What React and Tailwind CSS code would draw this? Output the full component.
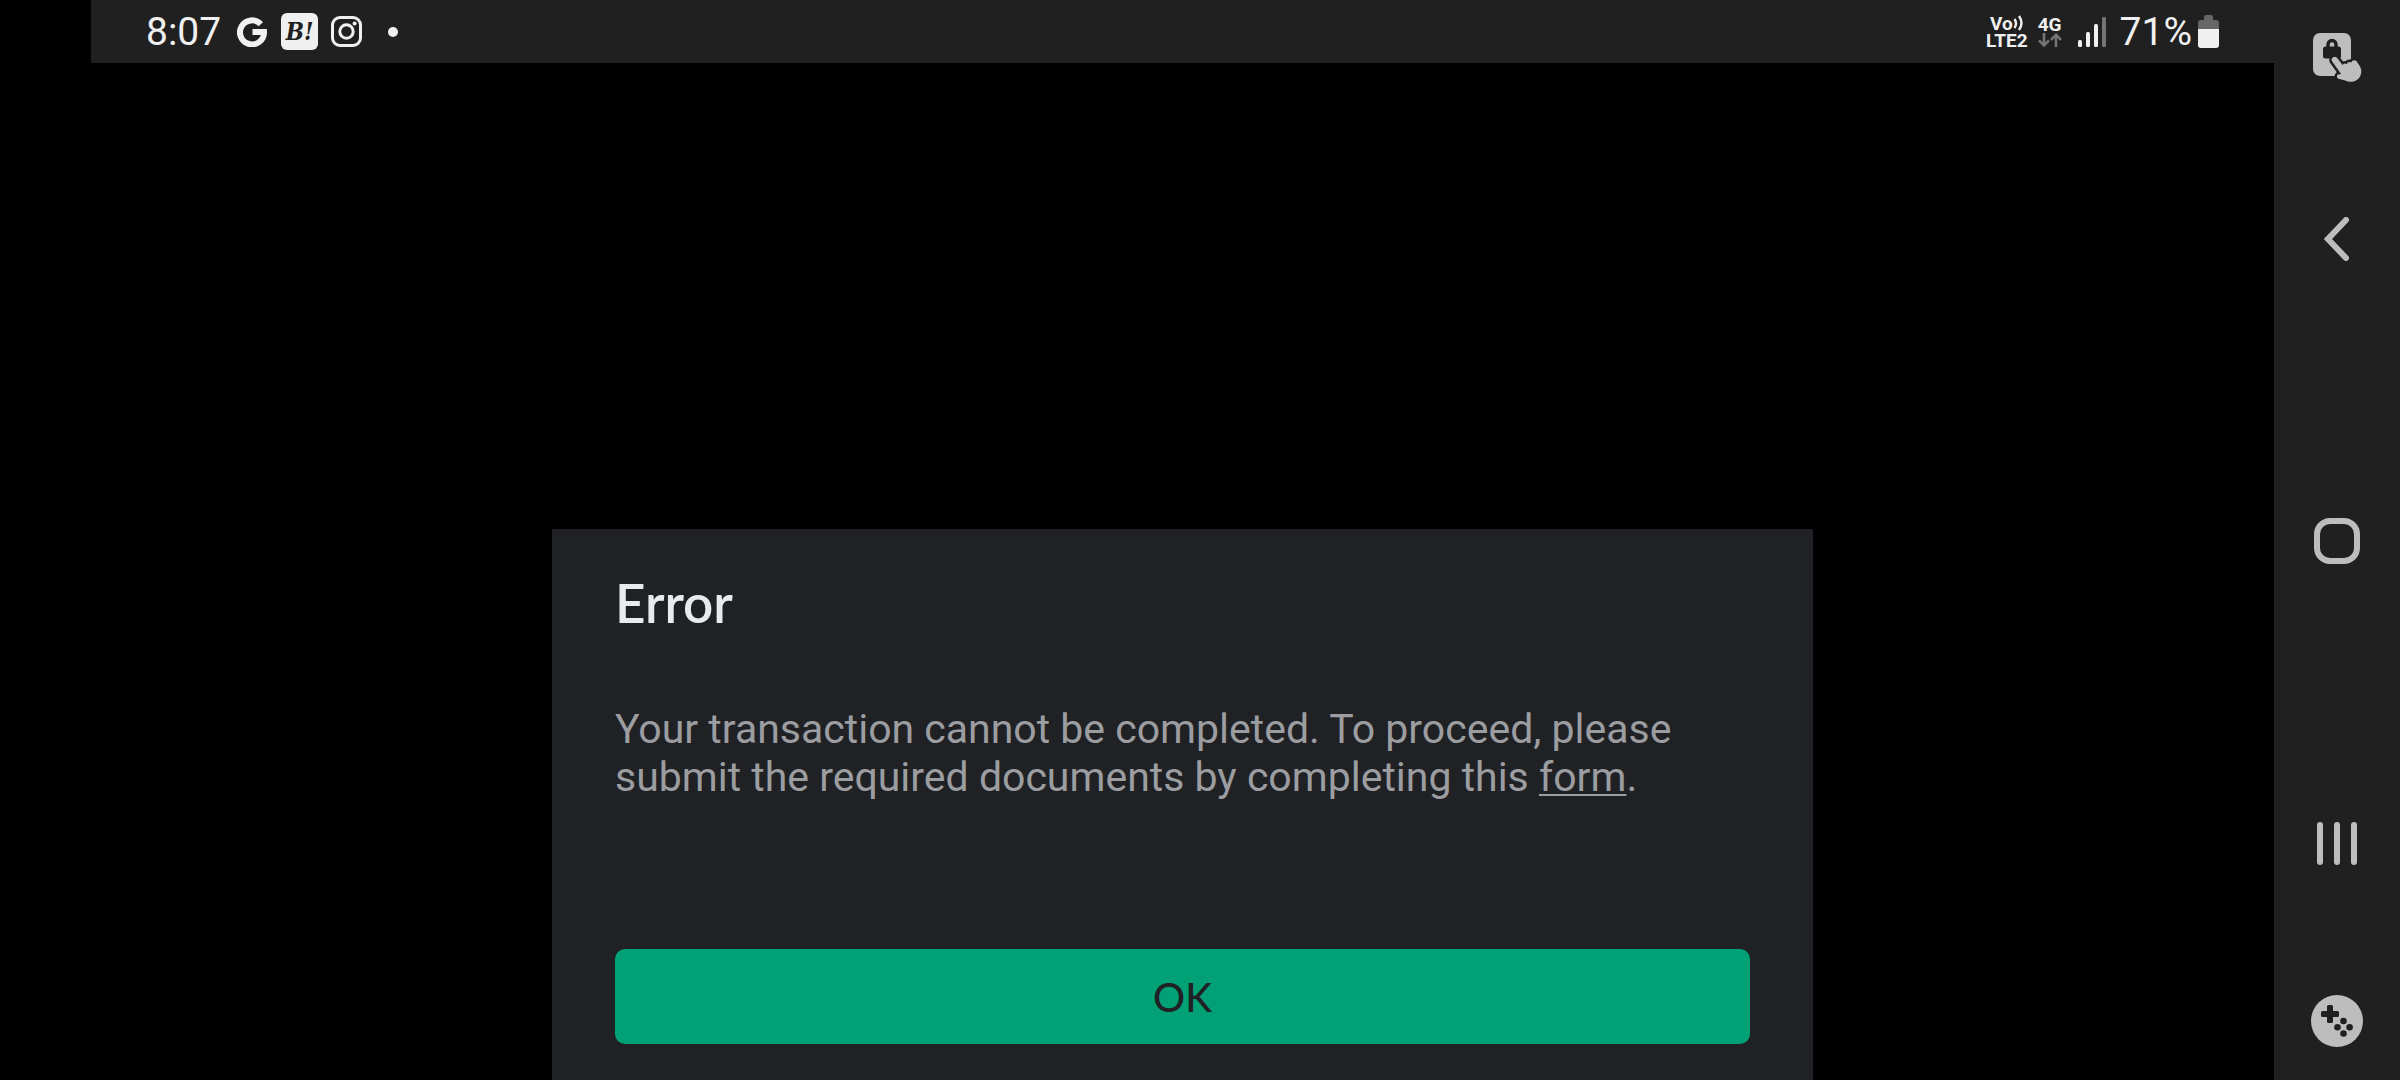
import React from 'react';

const GoogleIcon = () => (
  <svg viewBox="0 0 30 30" className="w-[30px] h-[30px]" fill="none" stroke="currentColor" strokeWidth="6">
    <path d="M23.8 7.2 A12 12 0 1 0 27 15 H15.5" strokeLinejoin="miter" />
  </svg>
);

const InstagramIcon = () => (
  <svg viewBox="0 0 31 31" className="w-[31px] h-[31px]" fill="none" stroke="currentColor" strokeWidth="3">
    <rect x="1.5" y="1.5" width="28" height="28" rx="7.5" />
    <circle cx="15.5" cy="15.5" r="6.7" />
    <circle cx="23.6" cy="7.4" r="2" fill="currentColor" stroke="none" />
  </svg>
);

const DataArrowsIcon = () => (
  <svg viewBox="0 0 24 14" className="w-6 h-[14px]" fill="none" stroke="#757575" strokeWidth="2.6">
    <path d="M6 0V12.4M1 7.4L6 12.4L11 7.4" />
    <path d="M18 14V1.8M13 6.8L18 1.8L23 6.8" />
  </svg>
);

const SignalIcon = () => (
  <svg viewBox="0 0 28 30" className="w-7 h-[30px]" fill="currentColor">
    <rect x="0" y="23" width="4" height="7" rx="1.5" />
    <rect x="8" y="15" width="4" height="15" rx="1.5" />
    <rect x="16" y="7" width="4" height="23" rx="1.5" />
    <rect x="24" y="0" width="4" height="30" rx="1.5" fill="#757575" />
  </svg>
);

const BatteryIcon = () => (
  <svg viewBox="0 0 21 33" className="w-[21px] h-[33px]">
    <path d="M6 5V2Q6 0 8 0H13Q15 0 15 2V5H18Q21 5 21 8V15H0V8Q0 5 3 5Z" fill="#666666" />
    <path d="M0 14H21V30Q21 33 18 33H3Q0 33 0 30Z" fill="currentColor" />
  </svg>
);

const TouchLockIcon = () => (
  <svg viewBox="0 0 48 49" className="w-12 h-[49px] overflow-visible">
    <rect width="38" height="43" rx="7" fill="currentColor" />
    <path d="M15 15V11.5a4 4 0 0 1 8 0V15" fill="none" stroke="#202020" strokeWidth="3.4" />
    <rect x="10" y="13.500" width="18" height="12" rx="2.5" fill="#202020" />
    <path
      d="M19.2 28.6a3 3 0 0 1 5.2-3.4L29.6 32q1.2-2.400 4.200-1q1-2.600 4.400-1.600q1.400-3.200 5-1.600l3.700 5.400q2.500 5 .6 9.400q-2 4.800-6.800 5.800q-4.600 1.200-8.500-1l-6.600-1.600q-3-1.800-.7-4.400l3.200-.4z"
      fill="currentColor"
      stroke="#202020"
      strokeWidth="5"
      strokeLinejoin="round"
      paintOrder="stroke"
    />
  </svg>
);

const BackIcon = () => (
  <svg viewBox="0 0 26 44" className="w-[26px] h-11" fill="none" stroke="currentColor" strokeWidth="6" strokeLinecap="round">
    <path d="M22 3L4 22L22 41" />
  </svg>
);

const HomeIcon = () => (
  <svg viewBox="0 0 46 46" className="w-[46px] h-[46px]" fill="none" stroke="currentColor" strokeWidth="6">
    <rect x="3" y="3" width="40" height="40" rx="13" />
  </svg>
);

const RecentsIcon = () => (
  <svg viewBox="0 0 41 43" className="w-[41px] h-[43px]" fill="currentColor">
    <rect x="0" width="6" height="43" rx="3" />
    <rect x="17" width="6" height="43" rx="3" />
    <rect x="34" width="6" height="43" rx="3" />
  </svg>
);

const GameIcon = () => (
  <svg viewBox="0 0 52 52" className="w-[52px] h-[52px]">
    <circle cx="26" cy="26" r="26" fill="currentColor" />
    <g fill="#202020">
      <rect x="16" y="10" width="6" height="18" rx="1.5" />
      <rect x="10" y="16" width="18" height="6" rx="1.5" />
      <circle cx="32.5" cy="26" r="3.3" />
      <circle cx="26.5" cy="32.2" r="3.3" />
      <circle cx="38.6" cy="32.2" r="3.3" />
      <circle cx="32.5" cy="38.5" r="3.3" />
    </g>
  </svg>
);

const StatusBar = () => (
  <header className="flex items-center justify-between h-[63px] px-[55px] bg-[#202020] text-[#f0f0f0]">
    <div className="flex items-center">
      <time className="text-[39px] leading-10 mr-4">8:07</time>
      <GoogleIcon />
      <div className="flex items-center justify-center w-[37px] h-[37px] ml-[14px] mr-[13px] rounded-md bg-[#f0f0f0] text-[#202020] font-['DejaVu_Serif_Condensed','DejaVu_Serif',serif] font-bold italic text-2xl">
        B!
      </div>
      <InstagramIcon />
      <span className="w-[10px] h-[10px] ml-[26px] rounded-full bg-[#f0f0f0]"></span>
    </div>

    <div className="flex items-center">
      <div className="flex flex-col items-center text-[19px] leading-[17px] font-bold mr-[10px]">
        <span className="flex items-center">
          Vo
          <svg viewBox="0 0 11 16" className="w-[11px] h-4" fill="none" stroke="currentColor" strokeWidth="2.4">
            <path d="M1.5 4Q4.5 8.5 1.5 13M6 1Q11 8 6 15" />
          </svg>
        </span>
        <span>LTE2</span>
      </div>
      <div className="flex flex-col items-center text-[19px] leading-[17px] font-bold mr-4">
        <span>4G</span>
        <DataArrowsIcon />
      </div>
      <SignalIcon />
      <span className="text-[39px] leading-10 ml-[14px] mr-[6px]">71%</span>
      <BatteryIcon />
    </div>
  </header>
);

const ErrorDialog = () => (
  <section
    role="dialog"
    aria-labelledby="error-title"
    className="w-full max-w-[1261px] mt-auto mx-auto px-[63px] pt-[42px] pb-9 bg-[#202125]"
  >
    <h1 id="error-title" className="font-['Lato',sans-serif] font-semibold text-[53px] leading-[64px] text-[#e8eaed]">
      Error
    </h1>
    <p className="mt-[70px] text-[41px] leading-12 text-[#9b9da1]">
      Your transaction cannot be completed. To proceed, please submit the required documents by completing this{' '}
      <a href="#form" className="underline decoration-2 underline-offset-3">form</a>.
    </p>
    <button
      type="button"
      className="block w-full h-[95px] mt-[148px] rounded-[10px] bg-[#01a175] font-['Lato',sans-serif] font-medium text-[40px] text-[#202125]"
    >
      OK
    </button>
  </section>
);

const navButtons = [
  { label: "Back", icon: BackIcon },
  { label: "Home", icon: HomeIcon },
  { label: "Recents", icon: RecentsIcon }
];

const NavigationBar = () => (
  <nav className="flex flex-col w-[126px] shrink-0 bg-[#202020] text-[#bdbdbd]">
    <button type="button" aria-label="Touch lock" className="flex justify-center h-[88px] pt-[33px]">
      <TouchLockIcon />
    </button>
    {navButtons.map((item) => (
      <button key={item.label} type="button" aria-label={item.label} className="flex flex-1 items-center justify-center">
        <item.icon />
      </button>
    ))}
    <button type="button" aria-label="Game tools" className="flex justify-center h-[85px]">
      <GameIcon />
    </button>
  </nav>
);

const App = () => {
  return (
    <div className="flex min-h-screen pl-[91px] bg-black font-['Roboto',sans-serif]">
      <main className="flex flex-col flex-1">
        <StatusBar />
        <ErrorDialog />
      </main>
      <NavigationBar />
    </div>
  );
};

export default App;
